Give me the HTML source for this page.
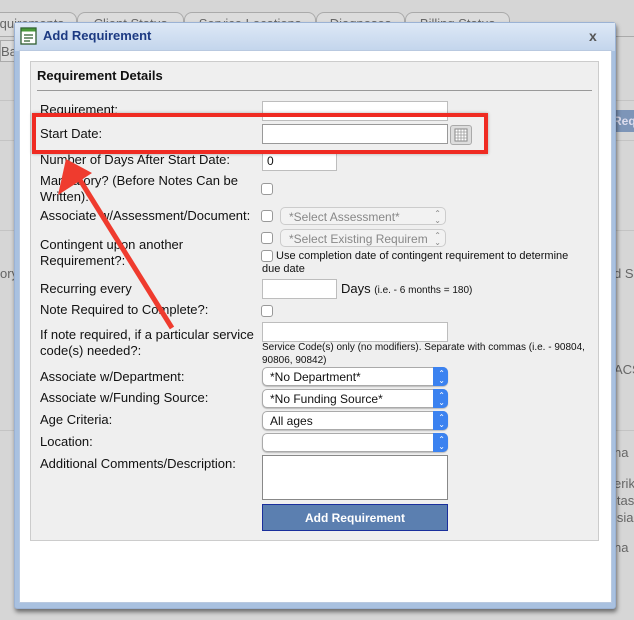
<!DOCTYPE html>
<html><head><meta charset="utf-8"><style>
*{box-sizing:border-box}
body{margin:0;width:634px;height:620px;background:#d6d6d6;font-family:"Liberation Sans",sans-serif;position:relative;overflow:hidden;color:#111}
.a{position:absolute}
.tab{position:absolute;top:12px;height:24px;border:1px solid #aaa;border-bottom:none;border-radius:8px 8px 0 0;background:#dcdcdc;font-size:13px;color:#666;text-align:center;padding-top:3px}
.lbl{position:absolute;left:40px;font-size:13px;line-height:16px;color:#111}
.in{position:absolute;left:262px;height:20px;background:#fff;border:1px solid #bdbdbd}
.cb{position:absolute;width:12px;height:12px;border:1px solid #999;border-radius:3px;background:#fff}
.sel{position:absolute;left:262px;width:186px;height:19px;background:#fff;border:1px solid #aaa;border-radius:5px;font-size:12px;padding:2px 0 0 7px;box-shadow:0 1px 1px #bbb}
.sel:after{content:"";position:absolute;right:-1px;top:-1px;width:15px;height:19px;background:#3b82f0;border-radius:0 5px 5px 0}
.sel b{position:absolute;right:2px;top:2px;color:#fff;font-size:8px;line-height:7px;z-index:2;font-weight:normal}
.dsel{position:absolute;left:280px;width:166px;height:18px;border:1px solid #ccc;border-radius:5px;background:#f2f2f2;color:#888;font-size:12px;padding:2px 0 0 8px}
.dsel b{position:absolute;right:4px;top:2px;font-size:8px;line-height:7px;font-weight:normal}
.sm{position:absolute;font-size:11px;line-height:13px;color:#111}
</style></head><body>
<div class="tab" style="left:-30px;width:107px">Requirements</div>
<div class="tab" style="left:77px;width:107px">Client Status</div>
<div class="tab" style="left:184px;width:132px">Service Locations</div>
<div class="tab" style="left:316px;width:89px">Diagnoses</div>
<div class="tab" style="left:405px;width:105px">Billing Status</div>
<div class="a" style="left:0;top:36px;width:634px;height:1px;background:#aaa"></div>
<div class="a" style="left:0;top:40px;width:30px;height:22px;border:1px solid #aaa;background:#ddd;font-size:13px;color:#666;padding:3px 0 0 0">Ba</div>
<div class="a" style="left:0;top:100px;width:634px;height:1px;background:#c4c4c4"></div>
<div class="a" style="left:0;top:140px;width:634px;height:1px;background:#c4c4c4"></div>
<div class="a" style="left:0;top:230px;width:634px;height:1px;background:#c4c4c4"></div>
<div class="a" style="left:0;top:430px;width:634px;height:1px;background:#c4c4c4"></div>
<div class="a" style="left:610px;top:110px;width:24px;height:22px;background:#7d95b8;color:#dde;font-size:12px;font-weight:bold;padding:4px 0 0 3px">Req</div>
<div class="a" style="left:614px;top:266px;font-size:13px;color:#666">d S</div>
<div class="a" style="left:614px;top:362px;font-size:13px;color:#666">ACS</div>
<div class="a" style="left:614px;top:445px;font-size:13px;color:#666">na</div>
<div class="a" style="left:614px;top:475px;font-size:13px;color:#666;line-height:17px">erik<br>itas<br>isia</div>
<div class="a" style="left:614px;top:540px;font-size:13px;color:#666">na</div>
<div class="a" style="left:0;top:266px;font-size:13px;color:#666">ory</div>

<!-- dialog -->
<div class="a" style="left:14px;top:22px;width:602px;height:587px;background:#a9c1e0;border:1px solid #9bb2d4;border-radius:3px;box-shadow:1px 3px 4px rgba(0,0,0,.5)"></div>
<div class="a" style="left:15px;top:23px;width:600px;height:28px;background:linear-gradient(#dde8f6,#c3d5ec)"></div>
<svg class="a" style="left:20px;top:27px" width="18" height="19"><rect x="1" y="1" width="15" height="16" fill="#fff" stroke="#2f5e2f" stroke-width="1.3"/><rect x="1.5" y="1.5" width="14" height="3" fill="#4a9a3a"/><path d="M4 8h9M4 11h9M4 14h6" stroke="#2f5e2f" stroke-width="1.2"/></svg>
<div class="a" style="left:43px;top:28px;font-size:13px;font-weight:bold;color:#1c3a82">Add Requirement</div>
<div class="a" style="left:589px;top:28px;font-size:14px;font-weight:bold;color:#555">x</div>
<div class="a" style="left:19px;top:50px;width:593px;height:553px;background:#fff;border:1px solid #b9c9e0"></div>
<div class="a" style="left:30px;top:61px;width:569px;height:480px;background:#efefef;border:1px solid #ccc"></div>
<div class="a" style="left:37px;top:68px;font-size:13px;font-weight:bold">Requirement Details</div>
<div class="a" style="left:37px;top:90px;width:555px;height:1px;background:#999"></div>

<div class="lbl" style="top:102px">Requirement:</div>
<div class="in" style="top:101px;width:186px"></div>
<div class="lbl" style="top:126px">Start Date:</div>
<div class="in" style="top:124px;width:186px;border-color:#999"></div>
<div class="a" style="left:450px;top:125px;width:22px;height:20px;border:1px solid #aaa;border-radius:3px;background:#ddd"><svg width="20" height="18"><rect x="4" y="3" width="12" height="12" fill="#fff" stroke="#888"/><path d="M4 6h12M4 9h12M4 12h12M7 3v12M10 3v12M13 3v12" stroke="#999" stroke-width=".8"/></svg></div>
<div class="lbl" style="top:152px">Number of Days After Start Date:</div>
<div class="in" style="top:151px;width:75px;font-size:12px;padding:2px 4px">0</div>
<div class="lbl" style="top:173px">Mandatory? (Before Notes Can be<br>Written):</div>
<div class="cb" style="left:261px;top:183px"></div>
<div class="lbl" style="top:208px">Associate w/Assessment/Document:</div>
<div class="cb" style="left:261px;top:210px"></div>
<div class="dsel" style="top:207px">*Select Assessment*<b>⌃<br>⌄</b></div>
<div class="lbl" style="top:237px">Contingent upon another<br>Requirement?:</div>
<div class="cb" style="left:261px;top:232px"></div>
<div class="dsel" style="top:229px">*Select Existing Requirem<b>⌃<br>⌄</b></div>
<div class="cb" style="left:261px;top:250px"></div>
<div class="sm" style="left:276px;top:250px">Use completion date of contingent requirement to determine</div>
<div class="sm" style="left:262px;top:263px">due date</div>
<div class="lbl" style="top:281px">Recurring every</div>
<div class="in" style="top:279px;width:75px"></div>
<div class="a" style="left:341px;top:281px;font-size:13px">Days <span style="font-size:10px">(i.e. - 6 months = 180)</span></div>
<div class="lbl" style="top:302px">Note Required to Complete?:</div>
<div class="cb" style="left:261px;top:305px"></div>
<div class="lbl" style="top:327px">If note required, if a particular service<br>code(s) needed?:</div>
<div class="in" style="top:322px;width:186px"></div>
<div class="sm" style="left:262px;top:341px;font-size:10px;width:330px">Service Code(s) only (no modifiers). Separate with commas (i.e. - 90804,<br>90806, 90842)</div>
<div class="lbl" style="top:369px">Associate w/Department:</div>
<div class="sel" style="top:367px">*No Department*<b>⌃<br>⌄</b></div>
<div class="lbl" style="top:390px">Associate w/Funding Source:</div>
<div class="sel" style="top:389px">*No Funding Source*<b>⌃<br>⌄</b></div>
<div class="lbl" style="top:412px">Age Criteria:</div>
<div class="sel" style="top:411px">All ages<b>⌃<br>⌄</b></div>
<div class="lbl" style="top:434px">Location:</div>
<div class="sel" style="top:433px"><b>⌃<br>⌄</b></div>
<div class="lbl" style="top:456px">Additional Comments/Description:</div>
<div class="in" style="top:455px;width:186px;height:45px;border-color:#888"></div>
<div class="a" style="left:262px;top:504px;width:186px;height:27px;background:#5b7fb0;border:1px solid #1a2f9c;color:#fff;font-size:12px;font-weight:bold;text-align:center;padding-top:6px">Add Requirement</div>

<!-- annotation -->
<div class="a" style="left:32px;top:113px;width:456px;height:41px;border:4px solid #ef2b22;box-shadow:0 0 3px rgba(0,0,0,.3)"></div>
<svg class="a" style="left:0;top:0" width="634" height="620"><line x1="172" y1="328" x2="80" y2="180" stroke="#ef3b2e" stroke-width="5"/><polygon points="66,159 92,173 58,195" fill="#ef3b2e"/></svg>
</body></html>
